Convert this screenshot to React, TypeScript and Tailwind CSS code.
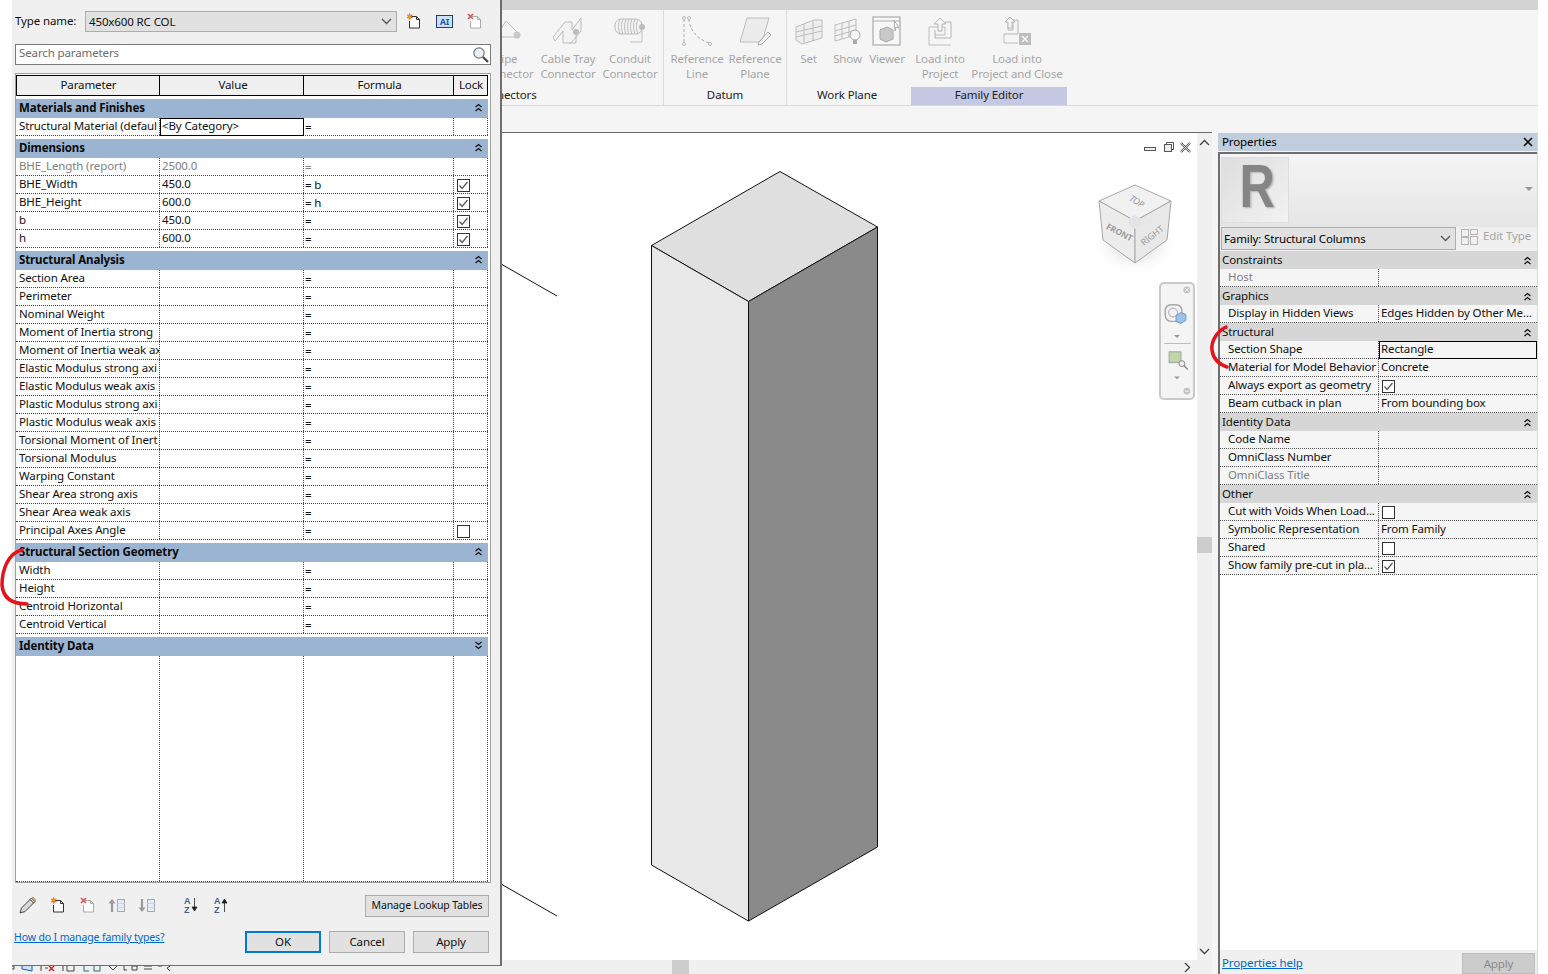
import React from "react";

const FONT = "font-['Noto_Sans','Liberation_Sans',sans-serif] tracking-[-0.12px]";

function Check() {
  return (
    <svg width="13" height="13" viewBox="0 0 13 13" className="block">
      <rect x="0.5" y="0.5" width="12" height="12" fill="#fff" stroke="#333" />
      <path d="M2.500 6.500l2.600 3L10.500 3" fill="none" stroke="#555" strokeWidth="1.200" />
    </svg>
  );
}
function Box() {
  return (
    <svg width="13" height="13" viewBox="0 0 13 13" className="block">
      <rect x="0.5" y="0.5" width="12" height="12" fill="#fff" stroke="#333" />
    </svg>
  );
}
function Chevs({ down = false }: { down?: boolean }) {
  return (
    <svg width="7" height="9" viewBox="0 0 7 9" className="block">
      <path
        d={down ? "M0.5 1l3 2.5 3-2.5M0.5 5l3 2.5 3-2.5" : "M0.5 4l3-2.5 3 2.5M0.5 8l3-2.5 3 2.5"}
        fill="none"
        stroke="#111"
        strokeWidth="1.2"
      />
    </svg>
  );
}
function ChevDown({ c = "#555" }: { c?: string }) {
  return (
    <svg width="11" height="7" viewBox="0 0 11 7" className="block">
      <path d="M1 1l4.5 4.5L10 1" fill="none" stroke={c} strokeWidth="1.3" />
    </svg>
  );
}

function Page({ mark }: { mark: "new" | "del" }) {
  const s = mark === "new" ? "#333" : "#aaa";
  return (
    <svg width="16" height="16" viewBox="0 0 16 16" className="block">
      <path d="M5 3.5h5.5l3 3v8.5H3.5V8" fill="#fff" stroke={s} />
      <path d="M10.5 3.5v3h3" fill="none" stroke={s} />
      {mark === "new" ? (
        <path d="M3.5 0.5l.9 1.7 1.9-.4-.9 1.7 1.2 1.5-1.9.1-.9 1.7-.9-1.7-1.9-.1 1.2-1.5-.9-1.7 1.9.4z" fill="#f59a00" stroke="#d9480f" strokeWidth=".4" />
      ) : (
        <path d="M1 1l5 5M6 1L1 6" stroke="#d9534f" strokeWidth="1.6" />
      )}
    </svg>
  );
}

function MoveIcon({ up }: { up: boolean }) {
  return (
    <svg width="17" height="15" viewBox="0 0 17 15" className="block">
      <path d={up ? "M4 1L0.5 5.5h2.4V14h2.2V5.5h2.4z" : "M4 14L0.5 9.5h2.4V1h2.2v8.500h2.4z"} fill="#9a9a9a" />
      <rect x="9.500" y="1.500" width="7" height="12" fill="#e2edf7" stroke="#aaa" />
      <path d="M9.500 5.500h7M9.500 9.500h7" stroke="#c3d6e8" />
    </svg>
  );
}
function Sort({ down }: { down: boolean }) {
  return (
    <svg width="15" height="16" viewBox="0 0 15 16" className="block">
      <text x="0" y="7" fontSize="9" fontWeight="700" fill="#44608a" fontFamily="Liberation Sans">A</text>
      <text x="0" y="15.500" fontSize="9" fontWeight="700" fill="#44608a" fontFamily="Liberation Sans">Z</text>
      <path d={down ? "M10.500 1v11M8 10l2.500 4 2.500-4z" : "M10.500 15V4M8 6l2.500-4 2.500 4z"} stroke="#222" fill="#222" strokeWidth=".8" />
    </svg>
  );
}

const PW = "grid grid-cols-[144px_144px_150px_34px]";
const HW = "grid grid-cols-[143px_144px_150px_33px]";

function Row({
  name,
  value = "",
  formula = "=",
  lock,
  dim,
  selected,
}: {
  name: string;
  value?: string;
  formula?: string;
  lock?: "on" | "off";
  dim?: boolean;
  selected?: boolean;
}) {
  const dot = "border-r border-dotted border-[#444]";
  return (
    <div className={`${PW} h-[18px] border-b border-dotted border-[#444] text-[11.500px] leading-[16px] ${dim ? "text-[#808080]" : "text-[#101010]"}`}>
      <div className={`${dot} pl-[3px] overflow-hidden whitespace-nowrap`}>{name}</div>
      {selected ? (
        <div className="-mb-px border border-black bg-white pl-px leading-[14px] text-[#101010]">{value}</div>
      ) : (
        <div className={`${dot} pl-[2px] overflow-hidden whitespace-nowrap`}>{value}</div>
      )}
      <div className={`${dot} pl-px whitespace-nowrap leading-[17px]`}>{formula}</div>
      <div className={`${dot} pl-[3px] pt-[3px]`}>{lock === "on" ? <Check /> : lock === "off" ? <Box /> : null}</div>
    </div>
  );
}

function Group({ title, down }: { title: string; down?: boolean }) {
  return (
    <div className="mt-[3px] flex h-[19px] items-center justify-between bg-[#9bb4d1] pb-[2px] pl-[3px] pr-[6px] text-[11.500px] font-bold text-[#0a0a0a]">
      <span>{title}</span>
      <Chevs down={down} />
    </div>
  );
}

const analysis = [
  "Section Area", "Perimeter", "Nominal Weight", "Moment of Inertia strong", "Moment of Inertia weak ax",
  "Elastic Modulus strong axi", "Elastic Modulus weak axis", "Plastic Modulus strong axi", "Plastic Modulus weak axis",
  "Torsional Moment of Inert", "Torsional Modulus", "Warping Constant", "Shear Area strong axis", "Shear Area weak axis",
];

function Dialog() {
  return (
    <div className="flex h-[966px] w-[490px] flex-col border-r-2 border-b border-[#6e6e6e] bg-[#f0f0f0] text-[#111]">
      <div className="flex h-[44px] items-start pt-[11px] pl-[3px]">
        <span className="w-[70px] pt-[1px] text-[11.500px] leading-[18px]">Type name:</span>
        <div className="flex h-[21px] w-[312px] items-center justify-between border border-[#adadad] bg-[#e1e1e1] pl-[3px] pr-[4px] text-[11.500px]">
          <span>450x600 RC COL</span>
          <ChevDown />
        </div>
        <div className="ml-[9px] mt-[2px] flex items-center gap-[14px]">
          <Page mark="new" />
          <span className="flex h-[13px] w-[17px] items-center justify-center border border-[#1c3f7a] bg-[#cfe0f5] text-[9px] font-bold leading-none text-[#1d5cb0]">AI</span>
          <Page mark="del" />
        </div>
      </div>
      <div className="ml-[3px] flex h-[21px] w-[476px] items-center justify-between border border-[#7a7a7a] bg-white pl-[3px] pr-[1px] text-[11.500px] text-[#6b6b6b]">
        <span className="-mt-[3px]">Search parameters</span>
        <svg width="17" height="17" viewBox="0 0 17 17" className="block">
          <circle cx="7" cy="7" r="5.200" fill="#e8f1f8" stroke="#777" strokeWidth="1.200" />
          <path d="M11 11l5 5" stroke="#444" strokeWidth="2.200" />
        </svg>
      </div>
      <div className="ml-[3px] mt-[8px] flex h-[810px] w-[476px] flex-col border border-[#a0a0a0] bg-white pr-[2px] pt-px">
        <div className={`${HW} h-[21px] border border-black bg-[#f0f0f0] text-center text-[11.500px] leading-[17px]`}>
          <div className="border-r border-black pl-px">Parameter</div>
          <div className="border-r border-black pl-[3px]">Value</div>
          <div className="border-r border-black pl-[2px]">Formula</div>
          <div className="pl-px">Lock</div>
        </div>
        <Group title="Materials and Finishes" />
        <Row name="Structural Material (defaul" value="<By Category>" selected />
        <Group title="Dimensions" />
        <Row name="BHE_Length (report)" value="2500.0" dim />
        <Row name="BHE_Width" value="450.0" formula="= b" lock="on" />
        <Row name="BHE_Height" value="600.0" formula="= h" lock="on" />
        <Row name="b" value="450.0" lock="on" />
        <Row name="h" value="600.0" lock="on" />
        <Group title="Structural Analysis" />
        {analysis.map((n) => (
          <Row key={n} name={n} />
        ))}
        <Row name="Principal Axes Angle" lock="off" />
        <Group title="Structural Section Geometry" />
        <Row name="Width" />
        <Row name="Height" />
        <Row name="Centroid Horizontal" />
        <Row name="Centroid Vertical" />
        <Group title="Identity Data" down />
        <div className={`${PW} min-h-0 flex-1 border-b border-dotted border-[#444]`}>
          <div className="border-r border-dotted border-[#444]" />
          <div className="border-r border-dotted border-[#444]" />
          <div className="border-r border-dotted border-[#444]" />
          <div className="border-r border-dotted border-[#444]" />
        </div>
      </div>
      <div className="mt-[12px] flex h-[22px] items-center pl-[7px] pr-[11px]">
        <svg width="18" height="18" viewBox="0 0 18 18" className="-mt-[2px] block">
          <path d="M1 17l1.500-5L12.500 2l3.500 3.500-10 10z" fill="#d8d8d8" stroke="#444" />
          <path d="M11 3.500L14.500 7" stroke="#444" />
          <path d="M12.500 2l3.500 3.500 1-1.500-3-3z" fill="#e8a060" stroke="#884" strokeWidth=".5" />
        </svg>
        <span className="ml-[13px] -mt-[2px]"><Page mark="new" /></span>
        <span className="ml-[14px] -mt-[2px]"><Page mark="del" /></span>
        <span className="ml-[12px] -mt-[2px]"><MoveIcon up /></span>
        <span className="ml-[13px] -mt-[2px]"><MoveIcon up={false} /></span>
        <span className="ml-[29px] -mt-[2px]"><Sort down /></span>
        <span className="ml-[15px] -mt-[2px]"><Sort down={false} /></span>
        <button className="ml-auto flex h-[22px] w-[124px] items-center justify-center whitespace-nowrap border border-[#adadad] bg-[#e1e1e1] text-[10.500px]">Manage Lookup Tables</button>
      </div>
      <div className="mt-[14px] flex items-start pl-[2px] pr-[11px]">
        <a className="mt-[-2px] text-[10.500px] leading-[16px] text-[#0066cc] underline">How do I manage family types?</a>
        <div className="ml-auto flex gap-[8px] text-[11.500px]">
          <button className="h-[22px] w-[76px] border-2 border-[#0078d7] bg-[#e1e1e1]">OK</button>
          <button className="h-[22px] w-[76px] border border-[#adadad] bg-[#e1e1e1]">Cancel</button>
          <button className="h-[22px] w-[76px] border border-[#adadad] bg-[#e1e1e1]">Apply</button>
        </div>
      </div>
    </div>
  );
}

function StatusIcons() {
  return (
    <svg width="190" height="8" viewBox="0 0 190 8" className="block">
      <g fill="none" stroke="#444" strokeWidth="1">
        <path d="M0 0h2v3H0" />
        <path d="M10 0v3l10 2V0" stroke="#1a5da8" fill="#cfe0f5" />
        <path d="M29 0v5M33 2h3" />
        <path d="M37 0l5 5M42 0l-5 5" stroke="#c22" strokeWidth="1.400" />
        <path d="M51 0v5M55 0v5h7V0" />
        <path d="M72 0v5h5M82 0v5h6V0" stroke="#367" />
        <path d="M97 0l4 4 4-4M112 0v4h3M120 0h5v4h-5zM132 0h8M132 3h8M146 0h4M158 0l-3 2 3 3" />
      </g>
    </svg>
  );
}

function RBtn({ w, l1, l2, children }: { w: string; l1: string; l2?: string; children: React.ReactNode }) {
  return (
    <div className={`${w} flex shrink-0 flex-col items-center`}>
      <div className="flex h-[38px] items-center justify-center pt-[4px]">{children}</div>
      <div className="mt-[3px] whitespace-nowrap text-center text-[11.500px] leading-[15px] text-[#a6a6a6]">
        {l1}
        <br />
        {l2 || "\u00a0"}
      </div>
    </div>
  );
}

const GS = { fill: "none", stroke: "#bdbdbd" } as const;

function Ribbon() {
  return (
    <div className="h-[96px] overflow-hidden border-b border-[#d9d9d9] bg-[#f5f5f5]">
      <div className="flex h-[95px]">
        <div className="ml-[-27px] flex w-[189px] shrink-0 flex-col border-r border-[#dcdcdc]">
          <div className="flex flex-1">
            <RBtn w="w-[62px]" l1="Pipe" l2="Connector">
              <svg width="32" height="32" viewBox="0 0 32 32">
                <path d="M6 22L16 6l12 12" {...GS} /><path d="M6 22h22" {...GS} /><circle cx="27" cy="20" r="3.500" fill="#c8c8c8" />
              </svg>
            </RBtn>
            <RBtn w="w-[62px]" l1="Cable Tray" l2="Connector">
              <svg width="32" height="28" viewBox="0 0 32 28">
                <path d="M1 20L13 5h7v8L29 1v13L19 26H11V14L3 24z" fill="#f2f2f2" stroke="#bdbdbd" /><circle cx="24" cy="15" r="3" fill="#bcbcbc" /><path d="M24 18v8h-7" {...GS} />
              </svg>
            </RBtn>
            <RBtn w="w-[62px]" l1="Conduit" l2="Connector">
              <svg width="32" height="26" viewBox="0 0 32 26">
                <rect x="1" y="1" width="27" height="15" rx="6" fill="#f2f2f2" stroke="#bdbdbd" />
                <path d="M6 1c-2 5-2 10 0 15M9 1c-2 5-2 10 0 15M12 1c-2 5-2 10 0 15M15 1c-2 5-2 10 0 15M18 1c-2 5-2 10 0 15M21 1c-2 5-2 10 0 15M24 1c-2 5-2 10 0 15" {...GS} />
                <circle cx="28" cy="9" r="3" fill="#bcbcbc" /><path d="M28 12v12H16" {...GS} />
              </svg>
            </RBtn>
          </div>
          <div className="h-[18px] pl-[1px] text-left text-[11.500px] leading-[16px] text-[#222]">Connectors</div>
        </div>
        <div className="flex w-[123px] shrink-0 flex-col border-r border-[#dcdcdc] pl-[4px]">
          <div className="flex flex-1">
            <RBtn w="w-[58px]" l1="Reference" l2="Line">
              <svg width="30" height="30" viewBox="0 0 30 30">
                <path d="M2 3v24M7 3c0 10 8 20 20 24" fill="none" stroke="#aaa" strokeDasharray="3 2" />
                <circle cx="2" cy="2" r="1.500" {...GS} /><circle cx="7" cy="2" r="1.500" {...GS} /><circle cx="2" cy="28" r="1.500" {...GS} /><circle cx="28" cy="28" r="1.500" {...GS} />
              </svg>
            </RBtn>
            <RBtn w="w-[58px]" l1="Reference" l2="Plane">
              <svg width="32" height="30" viewBox="0 0 32 30">
                <path d="M8 2h22l-7 24H1z" fill="#ececec" stroke="#bdbdbd" />
                <path d="M20 26l9-10 3 3-9 9-4 1z" fill="#f4f4f4" stroke="#a8a8a8" />
              </svg>
            </RBtn>
          </div>
          <div className="h-[18px] pr-[4px] text-center text-[11.500px] leading-[16px] text-[#222]">Datum</div>
        </div>
        <div className="flex w-[124px] shrink-0 flex-col pl-[2px]">
          <div className="flex flex-1">
            <RBtn w="w-[39px]" l1="Set">
              <svg width="28" height="28" viewBox="0 0 28 28">
                <path d="M1 10l18-7h8v18L7 27 1 23z" fill="#eee" stroke="#bdbdbd" />
                <path d="M9 7v19M18 4v20M1 15l26-6M1 20l26-6" {...GS} />
              </svg>
            </RBtn>
            <RBtn w="w-[39px]" l1="Show">
              <svg width="28" height="28" viewBox="0 0 28 28">
                <path d="M1 8l21-6v16L1 24z" fill="#f2f2f2" stroke="#bdbdbd" />
                <path d="M8 6v16M15 4v16M1 14l21-6M1 19l21-6" {...GS} />
                <circle cx="21" cy="18" r="5" fill="#f5f5f5" stroke="#aaa" /><rect x="19" y="23" width="4" height="4" fill="#aaa" />
              </svg>
            </RBtn>
            <RBtn w="w-[40px]" l1="Viewer">
              <svg width="30" height="30" viewBox="0 0 30 30">
                <rect x="1" y="1" width="27" height="28" fill="#f7f7f7" stroke="#b0b0b0" strokeWidth="1.300" />
                <path d="M1 5h27" stroke="#b0b0b0" />
                <path d="M8 14l7-3 6 3v9l-7 3-6-3z" fill="#c9c9c9" stroke="#a8a8a8" />
                <path d="M22 4l5 8-3-1-1 4z" fill="#fff" stroke="#aaa" />
              </svg>
            </RBtn>
          </div>
          <div className="h-[18px] pr-[6px] text-center text-[11.500px] leading-[16px] text-[#222]">Work Plane</div>
        </div>
        <div className="flex w-[156px] shrink-0 flex-col">
          <div className="flex flex-1">
            <RBtn w="w-[58px]" l1="Load into" l2="Project">
              <svg width="26" height="29" viewBox="0 0 26 29">
                <path d="M18 5h6v16H8v-8" fill="#f5f5f5" stroke="#b5b5b5" />
                <path d="M2 10h16v8H8M2 10v18h22" {...GS} />
                <path d="M13 1l6 6h-4v7h-4V7H7z" fill="#f5f5f5" stroke="#b5b5b5" />
              </svg>
            </RBtn>
            <RBtn w="w-[96px]" l1="Load into" l2="Project and Close">
              <svg width="30" height="30" viewBox="0 0 30 30">
                <path d="M2 18h14V4h-5v10H6V8" fill="#f5f5f5" stroke="#b5b5b5" />
                <path d="M8 1l5 5h-3v6H6V6H3z" fill="#f5f5f5" stroke="#b5b5b5" />
                <path d="M2 18v9h14" {...GS} />
                <rect x="17" y="17" width="12" height="12" fill="#bdbdbd" />
                <path d="M20 20l6 6M26 20l-6 6" stroke="#fff" strokeWidth="1.200" />
              </svg>
            </RBtn>
          </div>
          <div className="h-[18px] bg-[#c5c8e2] text-center text-[11.500px] leading-[16px] text-[#222]">Family Editor</div>
        </div>
      </div>
    </div>
  );
}

function Canvas() {
  return (
    <div className="relative min-h-0 flex-1 overflow-hidden bg-white">
      <svg width="695" height="827" viewBox="502 133 695 827" className="block">
        <path d="M501 264L557 296M501 884L557 916" stroke="#111" strokeWidth="1" fill="none" />
        <polygon points="780,171.500 877.500,227 748.500,301.500 651.500,245.500" fill="#dfdfdf" stroke="#111" />
        <polygon points="651.500,245.500 748.500,301.500 748.500,921 651.500,865" fill="#e8e8e8" stroke="#111" />
        <polygon points="748.500,301.500 877.500,227 877.500,847 748.500,921" fill="#8a8a8a" stroke="#111" />
      </svg>
      {/* view window controls */}
      <div className="absolute left-[641px] top-[8px] flex items-center gap-[5px]">
        <svg width="50" height="13" viewBox="0 0 50 13" className="block">
          <rect x="1.500" y="6.500" width="11" height="3" fill="#eee" stroke="#555" />
          <rect x="21.500" y="3.500" width="7" height="7" fill="#eee" stroke="#555" />
          <path d="M23.500 3.500v-2h7v7h-2" fill="none" stroke="#555" />
          <path d="M38 2l9 9M47 2l-9 9" stroke="#555" strokeWidth="2.200" />
          <path d="M38 2l9 9M47 2l-9 9" stroke="#eee" strokeWidth=".8" />
        </svg>
      </div>
      {/* view cube */}
      <div className="absolute left-[587px] top-[42px]">
        <svg width="96" height="104" viewBox="0 0 96 104" className="block">
          <defs>
            <radialGradient id="sh">
              <stop offset="0%" stopColor="#a8a8a8" stopOpacity=".7" />
              <stop offset="100%" stopColor="#fff" stopOpacity="0" />
            </radialGradient>
          </defs>
          <ellipse cx="46" cy="70" rx="44" ry="30" fill="url(#sh)" />
          <polygon points="46,10 82,26 46,46 10,26" fill="#f1f1f1" stroke="#a8a8a8" />
          <polygon points="10,26 46,46 46,88 14,65" fill="#ececec" stroke="#a8a8a8" />
          <polygon points="46,46 82,26 78,65 46,88" fill="#e8e8e8" stroke="#a8a8a8" />
          <polygon points="46,40 52,44 52,50 46,54 40,50 40,44" fill="#e2e4e8" />
          <text transform="translate(46 29) rotate(32)" textAnchor="middle" fontSize="9" fontStyle="italic" fontFamily="Noto Sans" fill="#9c9c9c">TOP</text>
          <text transform="translate(29 60) rotate(28)" textAnchor="middle" fontSize="8.500" fontWeight="700" fontFamily="Noto Sans" fill="#9c9c9c">FRONT</text>
          <text transform="translate(65 63) rotate(-38)" textAnchor="middle" fontSize="9" fontFamily="Noto Sans" fill="#9c9c9c">RIGHT</text>
        </svg>
      </div>
      {/* navigation bar */}
      <div className="absolute left-[657px] top-[149px] flex h-[118px] w-[36px] flex-col items-center rounded-[5px] border-2 border-[#c9c9c9] bg-[#f4f4f4] pt-[2px]">
        <svg width="32" height="114" viewBox="0 0 32 114" className="block">
          <circle cx="26" cy="4" r="3.500" fill="#c4c4c4" />
          <path d="M24 2l4 4M28 2l-4 4" stroke="#f4f4f4" />
          <rect x="4" y="19" width="17" height="17" rx="6" fill="#f2f2f2" stroke="#a8a8a8" strokeWidth="1.500" />
          <circle cx="12" cy="27" r="4.500" fill="none" stroke="#a8a8a8" />
          <path d="M15 30l5-3 5 2v6l-5 3-5-2z" fill="#9cc3e8" stroke="#6b9acb" />
          <path d="M13 50h6l-3 3z" fill="#9a9a9a" />
          <path d="M3 58.500h27" stroke="#bbb" />
          <rect x="8" y="67" width="12" height="11" fill="#c0d6a8" stroke="#a0a0a0" />
          <circle cx="21" cy="79" r="3" fill="#eee" stroke="#888" />
          <path d="M23 81l4 4" stroke="#888" strokeWidth="1.500" />
          <path d="M13 92h6l-3 3z" fill="#9a9a9a" />
          <circle cx="26" cy="107" r="3.500" fill="#c4c4c4" />
          <path d="M24 107h4" stroke="#f4f4f4" />
        </svg>
      </div>
    </div>
  );
}

function VScroll() {
  return (
    <div className="flex w-[15px] shrink-0 flex-col items-center bg-[#f0f0f0]">
      <div className="mt-[6px] rotate-180"><ChevDown c="#444" /></div>
      <div className="mt-[391px] h-[16px] w-full bg-[#cdcdcd]" />
      <div className="mb-[5px] mt-auto"><ChevDown c="#444" /></div>
    </div>
  );
}

type PRow = { n: string; v?: string; dim?: boolean; sel?: boolean; box?: "on" | "off" };
function PGroup({ t }: { t: string }) {
  return (
    <div className="flex h-[18px] items-center justify-between bg-[#d6d6d6] pl-[2px] pr-[6px] text-[11.500px] text-[#111]">
      <span>{t}</span>
      <Chevs />
    </div>
  );
}
function PR({ n, v = "", dim, sel, box }: PRow) {
  return (
    <div className={`grid h-[18px] grid-cols-[159px_158px] border-b border-dotted border-[#555] text-[11.500px] leading-[16px] ${dim ? "text-[#808080]" : "text-[#111]"}`}>
      <div className="overflow-hidden whitespace-nowrap border-r border-dotted border-[#555] pl-[8px]">{n}</div>
      {sel ? (
        <div className="-mb-px border border-black pl-px leading-[14px]">{v}</div>
      ) : box ? (
        <div className="pl-[3px] pt-[3px]">{box === "on" ? <Check /> : <Box />}</div>
      ) : (
        <div className="overflow-hidden whitespace-nowrap pl-[2px]">{v}</div>
      )}
    </div>
  );
}

function Properties() {
  return (
    <div className="flex w-[320px] shrink-0 flex-col border-r border-[#d8d8d8]">
      <div className="mt-px flex h-[18px] items-center justify-between bg-[#bfcddc] pl-[4px] pr-[4px] text-[11.500px]">
        <span>Properties</span>
        <svg width="10" height="10" viewBox="0 0 10 10" className="block">
          <path d="M1 1l8 8M9 1L1 9" stroke="#111" strokeWidth="1.700" />
        </svg>
      </div>
      <div className="mt-px flex min-h-0 flex-1 flex-col border-t-2 border-l-2 border-[#6e6e6e]">
        <div className="flex h-[73px] items-start bg-gradient-to-b from-[#f4f4f4] to-[#e6e6e6] pt-[3px] pl-[1px]">
          <div className="flex h-[66px] w-[68px] items-center justify-center overflow-hidden border border-[#dedede] bg-gradient-to-br from-[#dedede] to-[#f2f2f2] pb-[7px] pl-[4px] font-['Liberation_Sans',sans-serif] text-[61px] font-bold leading-none text-[#858585] [text-shadow:2px_1px_2px_#b0b0b0]">
            <span className="inline-block scale-x-[0.8]">R</span>
          </div>
          <div className="ml-auto mr-[4px] mt-[30px] h-0 w-0 border-x-[4px] border-t-[4px] border-x-transparent border-t-[#9a9a9a]" />
        </div>
        <div className="flex h-[24px] items-start bg-[#f0f0f0]">
          <div className="ml-px flex h-[23px] w-[235px] items-center justify-between border border-[#adadad] bg-[#e1e1e1] pl-[2px] pr-[4px] text-[11.500px]">
            <span>Family: Structural Columns</span>
            <ChevDown />
          </div>
          <svg width="18" height="16" viewBox="0 0 18 16" className="ml-[5px] mt-[2px] block" fill="none" stroke="#b5b5b5">
            <rect x="0.500" y="0.500" width="7" height="7" /><rect x="0.500" y="8.500" width="7" height="7" /><rect x="9.500" y="0.500" width="7" height="5" /><rect x="9.500" y="7.500" width="7" height="8" />
          </svg>
          <span className="ml-[4px] text-[11.500px] leading-[18px] text-[#a6a6a6]">Edit Type</span>
        </div>
        <PGroup t="Constraints" />
        <PR n="Host" dim />
        <PGroup t="Graphics" />
        <PR n="Display in Hidden Views" v="Edges Hidden by Other Me..." />
        <PGroup t="Structural" />
        <PR n="Section Shape" v="Rectangle" sel />
        <PR n="Material for Model Behavior" v="Concrete" />
        <PR n="Always export as geometry" box="on" />
        <PR n="Beam cutback in plan" v="From bounding box" />
        <PGroup t="Identity Data" />
        <PR n="Code Name" />
        <PR n="OmniClass Number" />
        <PR n="OmniClass Title" dim />
        <PGroup t="Other" />
        <PR n="Cut with Voids When Load..." box="off" />
        <PR n="Symbolic Representation" v="From Family" />
        <PR n="Shared" box="off" />
        <PR n="Show family pre-cut in pla..." box="on" />
        <div className="flex-1 bg-white" />
        <div className="flex h-[24px] items-start justify-between bg-[#f0f0f0] pl-[2px] pr-[2px]">
          <a className="pt-[5px] text-[11.500px] leading-[16px] text-[#0066cc] underline">Properties help</a>
          <div className="mt-[3px] flex h-[21px] w-[73px] items-center justify-center border border-[#bcbcbc] bg-[#cccccc] text-[11.500px] text-[#8a8a8a]">Apply</div>
        </div>
      </div>
    </div>
  );
}

export default function App() {
  return (
    <div className={`relative flex h-[974px] w-[1548px] overflow-hidden bg-white ${FONT}`}>
      <div className="w-[12px] shrink-0" />
      <div className="flex w-[490px] shrink-0 flex-col bg-[#f0f0f0]">
        <Dialog />
        <StatusIcons />
      </div>
      <div className="flex w-[1036px] shrink-0 flex-col">
        <div className="h-[10px] bg-[#d3d3d3]" />
        <Ribbon />
        <div className="h-[26px] bg-[#f5f5f5]" />
        <div className="flex min-h-0 flex-1 bg-[#f5f5f5]">
          <div className="flex w-[710px] shrink-0 flex-col border-t border-[#696969]">
            <div className="flex min-h-0 flex-1">
              <div className="flex min-w-0 flex-1 flex-col">
                <Canvas />
              </div>
              <VScroll />
            </div>
            <div className="flex h-[14px] shrink-0 items-center bg-[#f0f0f0]">
              <div className="ml-[170px] h-full w-[17px] bg-[#cdcdcd]" />
              <svg width="7" height="11" viewBox="0 0 7 11" className="ml-[495px] block">
                <path d="M1 1l4.500 4.500L1 10" fill="none" stroke="#444" strokeWidth="1.300" />
              </svg>
            </div>
          </div>
          <div className="w-[6px] shrink-0" />
          <Properties />
        </div>
      </div>
      {/* hand-drawn red annotation marks */}
      <svg width="1548" height="974" viewBox="0 0 1548 974" className="pointer-events-none absolute left-0 top-0">
        <path d="M22 550C8 553 2 570 2 585C3 598 12 604 27 604" fill="none" stroke="#e5141c" strokeWidth="3.500" strokeLinecap="round" />
        <path d="M1226 327C1216 332 1211 342 1212 350C1213 358 1218 364 1227 367" fill="none" stroke="#e5141c" strokeWidth="3.500" strokeLinecap="round" />
      </svg>
    </div>
  );
}
